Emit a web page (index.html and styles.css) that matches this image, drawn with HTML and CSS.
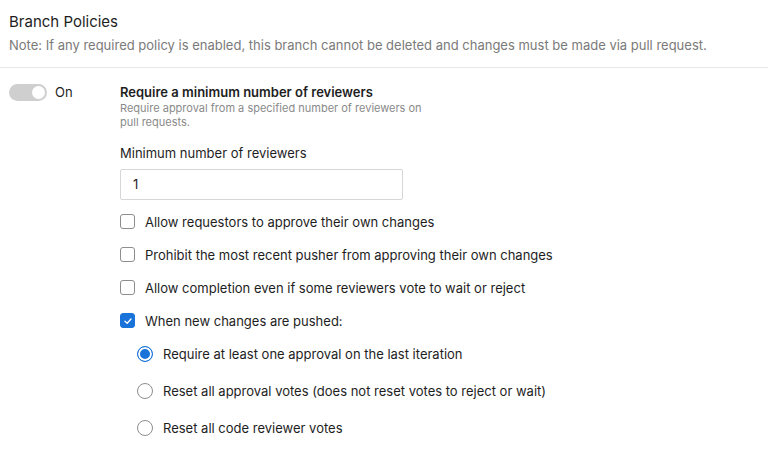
FILE: index.html
```html
<!DOCTYPE html>
<html lang="en">
<head>
    <meta charset="UTF-8">
    <title>Branch Policies</title>
    <link rel="stylesheet" href="styles.css">
</head>
<body>
<div class="page">
    <div class="header">
        <h1 class="title">Branch Policies</h1>
        <p class="note">Note: If any required policy is enabled, this branch cannot be deleted and changes must be made via pull request.</p>
    </div>

    <div class="policy">
        <div class="switch-col">
            <span class="toggle"><span class="knob"></span></span>
            <span class="toggle-label">On</span>
        </div>
        <div class="policy-body">
            <div class="policy-title">Require a minimum number of reviewers</div>
            <div class="policy-desc">Require approval from a specified number of reviewers on pull requests.</div>

            <label class="field-label">Minimum number of reviewers</label>
            <div class="text-box">1</div>

            <ul class="options">
                <li class="check-row"><span class="checkbox"></span>Allow requestors to approve their own changes</li>
                <li class="check-row"><span class="checkbox"></span>Prohibit the most recent pusher from approving their own changes</li>
                <li class="check-row"><span class="checkbox"></span>Allow completion even if some reviewers vote to wait or reject</li>
                <li class="check-row"><span class="checkbox checked">
                    <svg width="10" height="10" viewBox="0 0 10 10"><path d="M2 5.2 L4.2 7.2 L8 3" fill="none" stroke="#fff" stroke-width="1.3" stroke-linecap="round" stroke-linejoin="round"/></svg>
                </span>When new changes are pushed:</li>
            </ul>

            <ul class="radios">
                <li class="radio-row"><span class="radio selected"></span>Require at least one approval on the last iteration</li>
                <li class="radio-row"><span class="radio"></span>Reset all approval votes (does not reset votes to reject or wait)</li>
                <li class="radio-row"><span class="radio"></span>Reset all code reviewer votes</li>
            </ul>
        </div>
    </div>
</div>
</body>
</html>
```

FILE: styles.css
```css
* {
    padding: 0;
    margin: 0;
    list-style: none;
    box-sizing: border-box;
}

body {
    font-family: Inter, "Liberation Sans", Arial, sans-serif;
    color: #1e1e1e;
    background: #fff;
}

.header {
    padding: 12px 9px 0;
    height: 68px;
    border-bottom: 1px solid #e8e8e8;
}

.title {
    font-size: 15px;
    font-weight: normal;
    line-height: 20px;
}

.note {
    font-size: 13px;
    line-height: 18px;
    color: #7a7a7a;
    margin-top: 4px;
}

.policy {
    display: flex;
    padding: 16px 0 0 9px;
}

.switch-col {
    width: 111px;
    display: flex;
    align-items: flex-start;
    gap: 8px;
}

.toggle {
    width: 38px;
    height: 17px;
    border-radius: 9px;
    background: #cfcfcf;
    display: flex;
    justify-content: flex-end;
    align-items: center;
    padding: 0 2px;
}

.knob {
    width: 13px;
    height: 13px;
    border-radius: 50%;
    background: #fff;
}

.toggle-label {
    font-size: 13px;
    line-height: 17px;
}

.policy-title {
    font-size: 13px;
    font-weight: 600;
    line-height: 17px;
}

.policy-desc {
    font-size: 11px;
    line-height: 14px;
    color: #8a8a8a;
    width: 320px;
}

.field-label {
    display: block;
    font-size: 13px;
    line-height: 17px;
    margin-top: 16px;
}

.text-box {
    width: 283px;
    height: 31px;
    margin-top: 7px;
    border: 1px solid #d6d6d6;
    border-radius: 2px;
    font-size: 13px;
    line-height: 29px;
    padding-left: 12px;
}

.options {
    margin-top: 13px;
}

.check-row {
    display: flex;
    align-items: center;
    gap: 10px;
    font-size: 13px;
    height: 17px;
    margin-bottom: 16px;
}

.checkbox {
    width: 15px;
    height: 15px;
    border: 1px solid #8d8d8d;
    border-radius: 3px;
    display: flex;
    align-items: center;
    justify-content: center;
}

.checkbox.checked {
    background: #1a73d9;
    border-color: #1a73d9;
}

.radios {
    margin: 10px 0 0 17px;
}

.radio-row {
    display: flex;
    align-items: center;
    gap: 10px;
    font-size: 13px;
    height: 17px;
    margin-bottom: 20px;
}

.radio {
    width: 16px;
    height: 16px;
    border: 1px solid #8d8d8d;
    border-radius: 50%;
}

.radio.selected {
    border: 1.5px solid #1a73d9;
    background: #1a73d9;
    box-shadow: inset 0 0 0 2px #fff;
}
```
